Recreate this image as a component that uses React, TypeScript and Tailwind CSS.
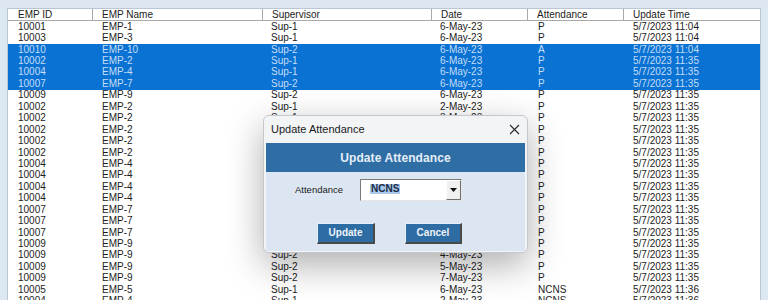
import React from "react";

type Row = [string, string, string, string, string, string, boolean?];

const T1 = "5/7/2023 11:04";
const T2 = "5/7/2023 11:35";
const T3 = "5/7/2023 11:36";

const rows: Row[] = [
  ["10001", "EMP-1", "Sup-1", "6-May-23", "P", T1],
  ["10003", "EMP-3", "Sup-1", "6-May-23", "P", T1],
  ["10010", "EMP-10", "Sup-2", "6-May-23", "A", T1, true],
  ["10002", "EMP-2", "Sup-1", "6-May-23", "P", T2, true],
  ["10004", "EMP-4", "Sup-1", "6-May-23", "P", T2, true],
  ["10007", "EMP-7", "Sup-2", "6-May-23", "P", T2, true],
  ["10009", "EMP-9", "Sup-2", "6-May-23", "P", T2],
  ["10002", "EMP-2", "Sup-1", "2-May-23", "P", T2],
  ["10002", "EMP-2", "Sup-1", "3-May-23", "P", T2],
  ["10002", "EMP-2", "Sup-1", "4-May-23", "P", T2],
  ["10002", "EMP-2", "Sup-1", "5-May-23", "P", T2],
  ["10002", "EMP-2", "Sup-1", "7-May-23", "P", T2],
  ["10004", "EMP-4", "Sup-1", "2-May-23", "P", T2],
  ["10004", "EMP-4", "Sup-1", "3-May-23", "P", T2],
  ["10004", "EMP-4", "Sup-1", "4-May-23", "P", T2],
  ["10004", "EMP-4", "Sup-1", "5-May-23", "P", T2],
  ["10007", "EMP-7", "Sup-2", "2-May-23", "P", T2],
  ["10007", "EMP-7", "Sup-2", "3-May-23", "P", T2],
  ["10007", "EMP-7", "Sup-2", "4-May-23", "P", T2],
  ["10009", "EMP-9", "Sup-2", "2-May-23", "P", T2],
  ["10009", "EMP-9", "Sup-2", "4-May-23", "P", T2],
  ["10009", "EMP-9", "Sup-2", "5-May-23", "P", T2],
  ["10009", "EMP-9", "Sup-2", "7-May-23", "P", T2],
  ["10005", "EMP-5", "Sup-1", "6-May-23", "NCNS", T3],
  ["10004", "EMP-4", "Sup-1", "2-May-23", "NCNS", T3],
];

const cols = "grid grid-cols-[85px_170px_169px_96px_96px_1fr]";

export default function App() {
  return (
    <div
      className="relative w-[768px] h-[300px] overflow-hidden bg-[#dde7f2]"
      style={{ fontFamily: '"Liberation Sans", Arial, sans-serif' }}
    >
      <div className="pt-[8px] pl-[7px] pr-[7px]">
        <div className="bg-white border-l border-t border-r border-[#b9c6d6] text-[10px] leading-none text-[#1c1c1c]">
          {/* header */}
          <div className={`${cols} h-[12px] border-b border-[#a9a9a9]`}>
            {["EMP ID", "EMP Name", "Supervisor", "Date", "Attendance", "Update Time"].map((h, i) => (
              <div
                key={h}
                className={`flex items-center ${i === 0 ? "pl-[10px]" : "pl-[9px]"} ${i < 5 ? "border-r border-[#a9a9a9]" : ""}`}
              >
                {h}
              </div>
            ))}
          </div>
          {rows.map((r, idx) => (
            <div
              key={idx}
              className={`${cols} h-[11.45px] ${r[6] ? "bg-[#0a72d2] text-[#c4ddf8]" : ""}`}
            >
              {r.slice(0, 6).map((c, i) => (
                <div
                  key={i}
                  className={`flex items-center whitespace-nowrap ${i === 0 || i === 4 ? "pl-[10px]" : i === 3 ? "pl-[8px]" : i === 2 ? "pl-[8px]" : "pl-[9px]"}`}
                >
                  {c as string}
                </div>
              ))}
            </div>
          ))}
        </div>
      </div>

      {/* dialog */}
      <div className="absolute left-[263px] top-[115px] w-[265px] h-[138px] rounded-[6px] border border-[#c4c8cc] bg-[#f3f4f6] shadow-[0_12px_36px_rgba(0,0,0,0.32)] flex flex-col overflow-hidden leading-none">
        <div className="h-[27px] flex items-center justify-between pl-[7px] pr-[6px]">
          <span className="text-[11px] text-[#1a1a1a]">Update Attendance</span>
          <svg width="11" height="11" viewBox="0 0 11 11" className="mr-[1px]">
            <path d="M1 1 L10 10 M10 1 L1 10" stroke="#2a2a2a" strokeWidth="1.1" />
          </svg>
        </div>
        <div className="flex-1 mx-[2px] mb-[1px] flex flex-col">
          <div className="h-[29px] bg-[#2f6da5] flex items-center justify-center">
            <span className="text-[12px] font-bold text-[#e4edf7] tracking-[0.1px]">Update Attendance</span>
          </div>
          <div className="flex-1 bg-[#dce6f2] flex flex-col pt-[7px]">
            <div className="flex items-center h-[22px] pl-[29px]">
              <span className="text-[9.5px] text-[#1a1a1a] w-[65px]">Attendance</span>
              <div className="w-[102px] h-[22px] bg-white border border-t-[#7a7a7a] border-l-[#7a7a7a] border-b-[#e6e6e6] border-r-[#e6e6e6] flex">
                <div className="flex-1 pl-[9px] pt-[4px] text-[10px] leading-none">
                  <span className="bg-[#a8c9ea] text-[#1d2b47] text-[10px] font-semibold px-[1px] leading-[10px] inline-block">NCNS</span>
                </div>
                <div className="w-[15px] h-full bg-[#f0f0f0] border-l border-t border-[#ffffff] border-r-[#6e6e6e] border-r border-b border-b-[#6e6e6e] flex items-center justify-center">
                  <svg width="7" height="4" viewBox="0 0 7 4">
                    <path d="M0 0 H7 L3.5 4 Z" fill="#111" />
                  </svg>
                </div>
              </div>
            </div>
            <div className="flex mt-[22px] pl-[51px] gap-[30px]">
              <div className="w-[58px] h-[21px] bg-[#2e6ca4] border-t border-l border-t-[#e7eef6] border-l-[#e7eef6] border-b-2 border-r-2 border-b-[#4a4a4a] border-r-[#4a4a4a] flex items-center justify-center">
                <span className="text-[10px] font-bold text-[#eef3f9]">Update</span>
              </div>
              <div className="w-[57px] h-[21px] bg-[#2e6ca4] border-t border-l border-t-[#e7eef6] border-l-[#e7eef6] border-b-2 border-r-2 border-b-[#4a4a4a] border-r-[#4a4a4a] flex items-center justify-center">
                <span className="text-[10px] font-bold text-[#eef3f9]">Cancel</span>
              </div>
            </div>
          </div>
        </div>
      </div>
    </div>
  );
}
